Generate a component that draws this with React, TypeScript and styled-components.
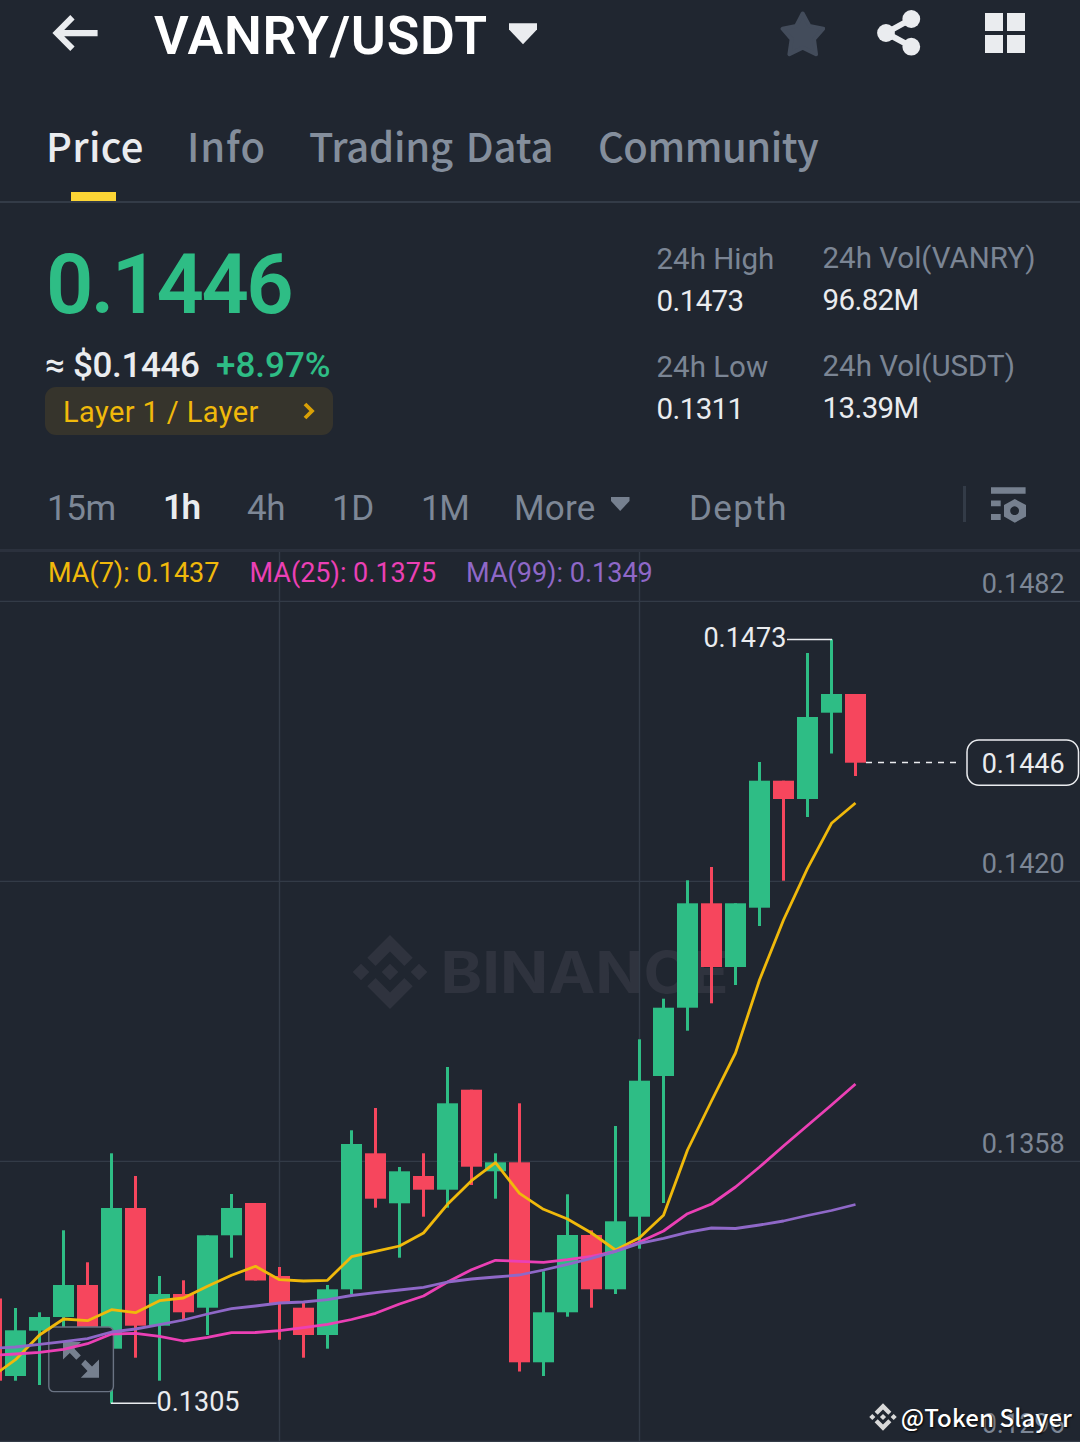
import React from "react";
import styled, { createGlobalStyle } from "styled-components";

const color = {
  bg: "#202630",
  text: "#eaecef",
  muted: "#848e9c",
  line: "#333b47",
  up: "#2ebd85",
  down: "#f6465d",
  ma7: "#f0b90b",
  ma25: "#eb40b5",
  ma99: "#8f68c8",
};

const Global = createGlobalStyle`
  body { margin: 0; background: ${color.bg}; }
  * { box-sizing: border-box; }
`;

const Screen = styled.main`
  width: 1080px;
  height: 1442px;
  overflow: hidden;
  display: flex;
  flex-direction: column;
  background: ${color.bg};
  color: ${color.text};
  font-family: Roboto, "Noto Sans", sans-serif;
  white-space: nowrap;
`;

const Glyph = styled.svg`
  display: block;
  flex: none;
`;

const Header = styled.header`
  display: flex;
  height: 108px;
  padding-left: 52px;
`;

const Pair = styled.h1`
  margin: 0 0 0 56px;
  width: 355px;
  font-size: 53.5px;
  line-height: 71px;
  font-weight: 600;
  color: #fff;
  letter-spacing: 0.75px;
`;

const Actions = styled.div`
  display: flex;
  margin-left: 243px;
`;

const ActionSlot = styled.span<{ $width: number }>`
  width: ${(p) => p.$width}px;
`;

const Tabs = styled.nav`
  display: flex;
  height: 95px;
  padding-left: 46px;
  border-bottom: 2px solid ${color.line};
`;

const Tab = styled.div<{ $active?: boolean; $width: number; $spacing: number }>`
  display: flex;
  flex-direction: column;
  justify-content: space-between;
  width: ${(p) => p.$width}px;
  font-family: "Noto Sans CJK SC", "Noto Sans", sans-serif;
  font-size: 40px;
  line-height: 75px;
  font-weight: 500;
  letter-spacing: ${(p) => p.$spacing}px;
  word-spacing: 4px;
  color: ${(p) => (p.$active ? color.text : color.muted)};
`;

const TabMark = styled.i`
  width: 45px;
  height: 9px;
  margin-left: 25px;
  background: #fcd535;
`;

const Summary = styled.section`
  display: flex;
  height: 257px;
  padding: 31px 0 0 45px;
`;

const PriceColumn = styled.div`
  width: 611px;
`;

const LastPrice = styled.div`
  padding-left: 1px;
  font-size: 83px;
  line-height: 102px;
  height: 106px;
  font-weight: 600;
  color: ${color.up};
  letter-spacing: -2.6px;
`;

const FiatRow = styled.div`
  display: flex;
  height: 47px;
  font-size: 35px;
  line-height: 52px;
  font-weight: 500;
`;

const Fiat = styled.span`
  width: 171px;
  letter-spacing: -0.35px;
`;

const Change = styled.span`
  color: ${color.up};
`;

const Tag = styled.div`
  display: flex;
  justify-content: space-between;
  align-items: center;
  width: 288px;
  height: 48px;
  padding: 0 18px;
  border-radius: 11px;
  background: #36342c;
  color: ${color.ma7};
  font-size: 29px;
  line-height: 50px;
  letter-spacing: 0.4px;
`;

const TagLabel = styled.span`
  height: 48px;
`;

const Stats = styled.div`
  display: flex;
  padding: 3px 0 0 0.5px;
`;

const StatColumn = styled.div<{ $width: number; $lift?: number }>`
  display: grid;
  grid-template-rows: 108px 108px;
  width: ${(p) => p.$width}px;
  margin-top: ${(p) => -(p.$lift ?? 0)}px;
`;

const StatLabel = styled.div`
  font-size: 29.5px;
  line-height: 44px;
  height: 43px;
  color: #7b8594;
`;

const StatValue = styled.div`
  font-size: 29.5px;
  line-height: 42px;
  letter-spacing: -0.6px;
`;

const Intervals = styled.nav`
  display: flex;
  height: 92px;
  padding-left: 47px;
  border-bottom: 3px solid #2b313d;
`;

const Interval = styled.div<{ $active?: boolean; $width: number; $spacing?: number }>`
  width: ${(p) => p.$width}px;
  font-size: 35px;
  line-height: ${(p) => (p.$active ? 95 : 97)}px;
  font-weight: ${(p) => (p.$active ? 600 : 400)};
  color: ${(p) => (p.$active ? color.text : "#7d8796")};
  letter-spacing: ${(p) => p.$spacing ?? -0.4}px;
`;

const MoreGroup = styled.div`
  display: flex;
  width: 175px;
`;

const Divider = styled.i`
  width: 3px;
  height: 36px;
  margin: 26px 25px 0 0;
  background: ${color.line};
`;

const ChartPanel = styled.section`
  position: relative;
  height: 890px;
`;

const ChartText = styled.text`
  font-family: Roboto, "Noto Sans", sans-serif;
  font-size: 27px;
`;

const BrandText = styled.text`
  font-family: Inter, Lato, sans-serif;
  font-size: 57.5px;
  font-weight: 700;
`;

const Legend = styled.div`
  position: absolute;
  top: 1px;
  left: 48px;
  display: flex;
  gap: 30px;
  font-size: 27px;
  line-height: 41px;
`;

const LegendItem = styled.span<{ $color: string }>`
  color: ${(p) => p.$color};
`;

const Credit = styled.div`
  position: absolute;
  right: 8px;
  bottom: 7px;
  display: flex;
  align-items: center;
  gap: 4px;
  font-family: "Noto Sans CJK SC", "Noto Sans", sans-serif;
  font-weight: 500;
  font-size: 24px;
  line-height: 36px;
  letter-spacing: 0.1px;
  color: #fff;
  text-shadow: 1px 1px 2px #000;
`;

type Candle = [up: 0 | 1, top: number, bottom: number, high: number, low: number];

const candles: Candle[] = [
  [0, 1298.5, 1380.7, 1298.5, 1380.7],
  [1, 1330.3, 1376, 1308, 1380.7],
  [1, 1317, 1330.7, 1312.3, 1385],
  [1, 1285, 1317, 1230.3, 1330],
  [0, 1285, 1327, 1262.3, 1330],
  [1, 1208, 1348.7, 1153.3, 1403.5],
  [0, 1208, 1325.7, 1176, 1357.7],
  [1, 1294, 1325.7, 1276, 1380.7],
  [0, 1294, 1312.3, 1280.3, 1319.3],
  [1, 1235.3, 1307.7, 1235.3, 1335],
  [1, 1208, 1235.3, 1194, 1257.7],
  [0, 1203, 1280.5, 1203, 1280.5],
  [0, 1276, 1303, 1267, 1339.7],
  [0, 1307.7, 1335, 1303, 1357.7],
  [1, 1289.3, 1335, 1285, 1348.7],
  [1, 1144, 1289.3, 1130.3, 1294],
  [0, 1153.3, 1198.7, 1108, 1207.7],
  [1, 1171.3, 1203.3, 1167, 1257.7],
  [0, 1176, 1189.7, 1153.3, 1216.7],
  [1, 1103.3, 1189.7, 1067, 1207.7],
  [0, 1089.7, 1166.7, 1089.7, 1185],
  [1, 1162.3, 1171.3, 1153.3, 1198.7],
  [0, 1162.3, 1362.3, 1103.3, 1371.5],
  [1, 1312.3, 1362.3, 1271.3, 1376],
  [1, 1235, 1312.3, 1194.3, 1316.7],
  [0, 1235, 1289.3, 1230.3, 1307.7],
  [1, 1221.3, 1289.3, 1126, 1294],
  [1, 1080.7, 1216.7, 1039.3, 1248.7],
  [1, 1007.7, 1076, 998.7, 1203],
  [1, 903.3, 1007.7, 880.3, 1030.7],
  [0, 903.3, 967, 867, 1003.3],
  [1, 903.3, 967, 903.3, 985],
  [1, 780.7, 907.7, 762, 926],
  [0, 780.7, 799, 780.7, 880.7],
  [1, 717, 799, 653, 817],
  [1, 694, 712.7, 639.3, 753.5],
  [0, 694, 762.7, 694, 776],
];

const ma7 = [1377, 1359.7, 1335, 1319, 1320.7, 1309.7, 1312.7, 1300.7, 1298, 1286.3, 1275.3, 1266.3, 1279.7, 1281, 1280.3, 1256.7, 1251.3, 1246, 1233, 1204.3, 1180.7, 1162.7, 1193.3, 1209.3, 1219, 1233, 1250, 1237.7, 1215.3, 1150, 1101, 1053, 980, 920, 868.3, 823.3, 803];
const ma25 = [1355.5, 1354, 1352.3, 1349.3, 1343.7, 1334, 1333.3, 1336.3, 1341, 1337.3, 1332.7, 1332.5, 1330.7, 1327.7, 1324.3, 1319.5, 1313.3, 1304, 1296, 1282, 1269.7, 1260.3, 1261.3, 1262.3, 1259.7, 1256.3, 1251.3, 1242, 1231, 1213.7, 1204, 1187, 1167, 1146, 1125.5, 1105, 1084];
const ma99 = [1348.5, 1347, 1344.3, 1341.7, 1338.7, 1332, 1329, 1324.7, 1320, 1314, 1308.7, 1306, 1303, 1302, 1299.7, 1295.5, 1292.7, 1290, 1287.3, 1282, 1279, 1277, 1275, 1270, 1264.3, 1258.3, 1251.3, 1243.3, 1238.3, 1232.3, 1228, 1228.5, 1225, 1221, 1215.5, 1210.5, 1204.5];

const candleX = (i: number) => -8.5 + i * 24;
const toPoints = (values: number[]) => values.map((y, i) => `${candleX(i)},${y}`).join(" ");

const BinanceMark = ({ fill }: { fill: string }) => (
  <path
    fill={fill}
    d="M0-37L22.7-14.3L14.4-6L0-20.4L-14.4-6L-22.7-14.3ZM0 37L22.7 14.3L14.4 6L0 20.4L-14.4 6L-22.7 14.3ZM0-8.3L8.3 0L0 8.3L-8.3 0ZM-29-8.3L-20.7 0L-29 8.3L-37.3 0ZM29-8.3L37.3 0L29 8.3L20.7 0Z"
  />
);

const BackIcon = () => (
  <Glyph width="46" height="70" viewBox="52 0 46 70">
    <path fill={color.text} d="M52.4 33L70.3 15L74.6 19.5L64.2 30H97.6V36.3H64.2L74.6 46.5L70.3 51Z" />
  </Glyph>
);

const PairCaret = () => (
  <Glyph width="28" height="70" viewBox="509 0 28 70">
    <path fill={color.text} d="M509 23.3H537V29.5L523 44.2L509 29.5Z" />
  </Glyph>
);

const StarIcon = () => (
  <Glyph width="45" height="70" viewBox="780 0 45 70">
    <path
      fill="#434c5b"
      stroke="#434c5b"
      strokeWidth="4"
      strokeLinejoin="round"
      d="M802.7 13.5L809.4 25.9L823.2 28.7L814 39.2L816 54.2L802.7 47.7L789.4 54.2L791.6 39.2L782.6 28.7L796.2 25.9Z"
    />
  </Glyph>
);

const ShareIcon = () => (
  <Glyph width="44" height="70" viewBox="877 0 44 70">
    <g fill={color.text}>
      <circle cx="886" cy="33" r="8.9" />
      <circle cx="911.3" cy="19" r="8.9" />
      <circle cx="911.3" cy="46.7" r="8.9" />
    </g>
    <path d="M911.3 19L886 33L911.3 46.7" fill="none" stroke={color.text} strokeWidth="6" />
  </Glyph>
);

const GridIcon = () => (
  <Glyph width="40" height="70" viewBox="985 0 40 70">
    <path fill={color.text} d="M985 13h18v18h-18zM1007 13h18v18h-18zM985 35h18v18h-18zM1007 35h18v18h-18z" />
  </Glyph>
);

const TagArrow = () => (
  <Glyph width="12" height="18" viewBox="0 0 12 18">
    <path d="M2 2L9 9L2 16" fill="none" stroke="#d9a006" strokeWidth="3.8" />
  </Glyph>
);

const MoreCaret = () => (
  <Glyph width="19" height="92" viewBox="611 460 19 92">
    <path fill="#76808f" d="M611 497H629.5V501L620.2 511L611 501Z" />
  </Glyph>
);

const SettingsIcon = () => (
  <Glyph width="36" height="92" viewBox="991 460 36 92">
    <path
      fill="#76808f"
      fillRule="evenodd"
      d="M991 487.3H1025.6V493.8H991ZM991 500.6H1000.7V506.3H991ZM991 514H1000.7V520H991ZM1014.8 499L1026 505V516.6L1014.8 522.7L1004 516.6V505ZM1014.6 506.3a4.4 4.4 0 1 0 .01 0Z"
    />
  </Glyph>
);

const Chart = () => (
  <Glyph width="1080" height="890" viewBox="0 552 1080 890">
    <g transform="translate(390 972)">
      <BinanceMark fill="#2f333e" />
    </g>
    <BrandText x="440.5" y="993" textLength="288" lengthAdjust="spacingAndGlyphs" fill="#2f333e">BINANCE</BrandText>
    <g stroke={color.line} strokeWidth="1.4">
      {[279.5, 639.5].map((x) => <line key={x} x1={x} x2={x} y1="552" y2="1442" />)}
      {[601.4, 881.4, 1161.4, 1441.4].map((y) => <line key={y} x1="0" x2="1080" y1={y} y2={y} />)}
    </g>
    {candles.map(([up, top, bottom, high, low], i) => (
      <g key={i} fill={up ? color.up : color.down}>
        <rect x={candleX(i) - 1.5} y={high} width="3" height={low - high} />
        <rect x={candleX(i) - 10.5} y={top} width="21" height={bottom - top} />
      </g>
    ))}
    <rect x="48.8" y="1327" width="64.6" height="64.6" rx="5" fill={color.bg} stroke="#6a7383" strokeWidth="1.4" />
    <path
      fill="#76808f"
      d="M63 1342H81L74.4 1348.7L80.8 1355.6L76.3 1359.7L69.8 1353L63 1359.5ZM99 1377.7H80.8L87.5 1370.9L81.2 1364.2L85.2 1359.7L92 1366.5L99 1359.5Z"
    />
    <g fill="none" strokeWidth="2.8" strokeLinejoin="round">
      <polyline points={toPoints(ma7)} stroke={color.ma7} />
      <polyline points={toPoints(ma25)} stroke={color.ma25} />
      <polyline points={toPoints(ma99)} stroke={color.ma99} />
    </g>
    <g stroke={color.text} strokeWidth="1.5">
      <line x1="787" x2="832" y1="639.5" y2="639.5" />
      <line x1="111" x2="156.5" y1="1403.3" y2="1403.3" />
      <line x1="866" x2="957" y1="762.4" y2="762.4" strokeDasharray="6 6" />
    </g>
    <ChartText x="703.4" y="646.7" fill={color.text}>0.1473</ChartText>
    <ChartText x="156.5" y="1410.7" fill={color.text}>0.1305</ChartText>
    <rect x="967" y="740" width="111.5" height="45.3" rx="12" fill={color.bg} stroke={color.text} strokeWidth="1.5" />
    <ChartText x="981.7" y="772.7" fill={color.text}>0.1446</ChartText>
    <g fill="#7d8796">
      <ChartText x="981.7" y="592.7">0.1482</ChartText>
      <ChartText x="981.7" y="872.7">0.1420</ChartText>
      <ChartText x="981.7" y="1152.7">0.1358</ChartText>
      <ChartText x="981.7" y="1432.7">0.1296</ChartText>
    </g>
  </Glyph>
);

export default function App() {
  return (
    <Screen>
      <Global />
      <Header>
        <BackIcon />
        <Pair>VANRY/USDT</Pair>
        <PairCaret />
        <Actions>
          <ActionSlot $width={97}><StarIcon /></ActionSlot>
          <ActionSlot $width={108}><ShareIcon /></ActionSlot>
          <GridIcon />
        </Actions>
      </Header>
      <Tabs>
        <Tab $active $width={141} $spacing={0.3}>Price<TabMark /></Tab>
        <Tab $width={122} $spacing={0.9}>Info</Tab>
        <Tab $width={289} $spacing={-0.2}>Trading Data</Tab>
        <Tab $width={240} $spacing={-0.5}>Community</Tab>
      </Tabs>
      <Summary>
        <PriceColumn>
          <LastPrice>0.1446</LastPrice>
          <FiatRow>
            <Fiat>≈ $0.1446</Fiat>
            <Change>+8.97%</Change>
          </FiatRow>
          <Tag><TagLabel>Layer 1 / Layer</TagLabel><TagArrow /></Tag>
        </PriceColumn>
        <Stats>
          <StatColumn $width={166}>
            <div><StatLabel>24h High</StatLabel><StatValue>0.1473</StatValue></div>
            <div><StatLabel>24h Low</StatLabel><StatValue>0.1311</StatValue></div>
          </StatColumn>
          <StatColumn $width={230} $lift={1}>
            <div><StatLabel>24h Vol(VANRY)</StatLabel><StatValue>96.82M</StatValue></div>
            <div><StatLabel>24h Vol(USDT)</StatLabel><StatValue>13.39M</StatValue></div>
          </StatColumn>
        </Stats>
      </Summary>
      <Intervals>
        <Interval $width={116}>15m</Interval>
        <Interval $active $width={84} $spacing={-1.5}>1h</Interval>
        <Interval $width={85}>4h</Interval>
        <Interval $width={89}>1D</Interval>
        <Interval $width={93} $spacing={-1.5}>1M</Interval>
        <MoreGroup>
          <Interval $width={97} $spacing={0.2}>More</Interval>
          <MoreCaret />
        </MoreGroup>
        <Interval $width={274} $spacing={1.4}>Depth</Interval>
        <Divider />
        <SettingsIcon />
      </Intervals>
      <ChartPanel>
        <Chart />
        <Legend>
          <LegendItem $color={color.ma7}>MA(7): 0.1437</LegendItem>
          <LegendItem $color={color.ma25}>MA(25): 0.1375</LegendItem>
          <LegendItem $color={color.ma99}>MA(99): 0.1349</LegendItem>
        </Legend>
        <Credit>
          <Glyph width="28" height="28" viewBox="-38 -38 76 76">
            <BinanceMark fill="#d9d9d9" />
          </Glyph>
          @Token Slayer
        </Credit>
      </ChartPanel>
    </Screen>
  );
}
